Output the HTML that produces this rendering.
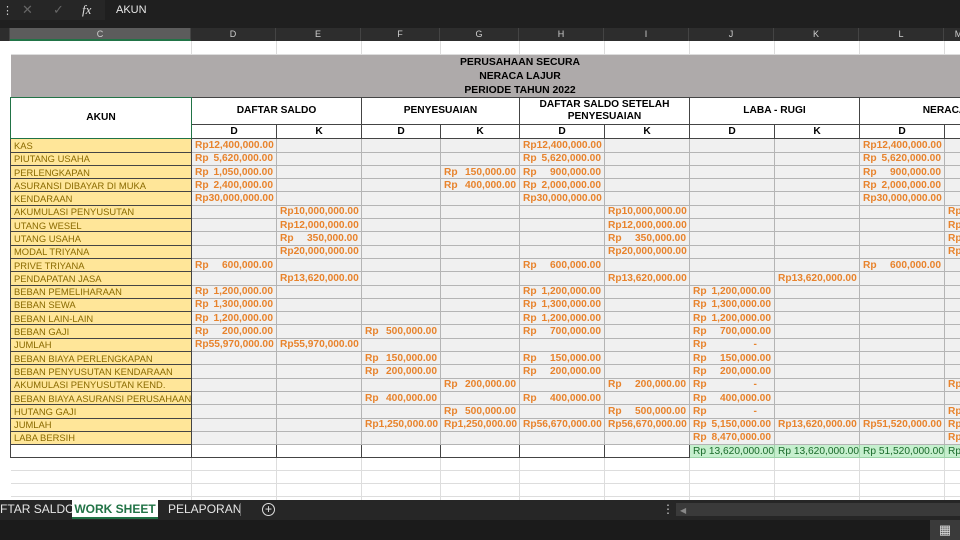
<!DOCTYPE html>
<html><head><style>
*{box-sizing:border-box;margin:0;padding:0}
body{width:960px;height:540px;overflow:hidden;position:relative;background:#fff;font-family:"Liberation Sans",sans-serif}
.top{position:absolute;left:0;top:0;width:960px;height:20px;background:#262626}
.fx{position:absolute;left:105px;top:0;right:0;height:20px;background:#1f1f1f;color:#e8e8e8;font-size:11px;line-height:20px;padding-left:11px}
.gap{position:absolute;left:0;top:20px;width:960px;height:8px;background:#1f1f1f}
.ch{position:absolute;top:28px;height:13px;background:#2d2d2d;color:#cfcfcf;font-size:9px;text-align:center;line-height:13px;border-right:1px solid #444}
table{position:absolute;left:10px;top:41px;border-collapse:collapse;table-layout:fixed;width:1019px}
td{font:bold 10.2px "Liberation Sans",sans-serif;white-space:nowrap;overflow:hidden;padding:0 3px;border:1px solid #b4b4b4;background:#f0f0f0;color:#e8832c;text-align:right;line-height:11px}
td .r{float:left}
tr.d{height:13.3px}
td.a{background:#ffe699;color:#8a6a00;font-weight:normal;text-align:left;border-color:#444;font-size:9.4px}
tr.t td{background:#aeaaaa;border:none;color:#000;text-align:center;height:14.6px;line-height:12px;vertical-align:bottom;padding:0;font-size:10.4px}
tr.h td{background:#fff;color:#000;text-align:center;border:1px solid #444;line-height:12px}
tr.g td{background:#fff;border:1px solid #444;height:13px}
tr.g td.gr{background:#c6efce;color:#1a6b2a;font-weight:normal;border-color:#9bd3a7}
.bl td{background:#fff;border:none;border-right:1px solid #ddd;border-bottom:1px solid #ddd;height:13px}
.tabs{position:absolute;left:0;top:500px;width:960px;height:20px;background:#262626;color:#e6e6e6;font-size:12px;line-height:18px}
.status{position:absolute;left:0;top:520px;width:960px;height:20px;background:#1b1b1b}
</style></head><body>
<div class="top"></div>
<div style="position:absolute;left:2px;top:4px;color:#ccc;font-size:11px">⋮</div>
<div style="position:absolute;left:22px;top:2px;color:#666;font-size:13px">✕</div>
<div style="position:absolute;left:53px;top:2px;color:#666;font-size:13px">✓</div>
<div style="position:absolute;left:82px;top:2px;color:#ddd;font:italic 13px 'Liberation Serif',serif">fx</div>
<div class="fx">AKUN</div>
<div class="gap"></div>
<div class="ch" style="left:0;width:10px;background:#2d2d2d"></div>
<div class="ch" style="left:10px;width:181px;background:#5c5c5c;border-bottom:2px solid #217346">C</div>
<div class="ch" style="left:191px;width:85px">D</div>
<div class="ch" style="left:276px;width:85px">E</div>
<div class="ch" style="left:361px;width:79px">F</div>
<div class="ch" style="left:440px;width:79px">G</div>
<div class="ch" style="left:519px;width:85px">H</div>
<div class="ch" style="left:604px;width:85px">I</div>
<div class="ch" style="left:689px;width:85px">J</div>
<div class="ch" style="left:774px;width:85px">K</div>
<div class="ch" style="left:859px;width:85px">L</div>
<div class="ch" style="left:944px;width:30px">M</div>
<table>
<colgroup><col style="width:181px"><col style="width:85px"><col style="width:85px"><col style="width:79px"><col style="width:79px"><col style="width:85px"><col style="width:85px"><col style="width:85px"><col style="width:85px"><col style="width:85px"><col style="width:85px"></colgroup>
<tr class="bl"><td></td><td></td><td></td><td></td><td></td><td></td><td></td><td></td><td></td><td></td><td></td></tr>
<tr class="t"><td colspan="11">PERUSAHAAN SECURA</td></tr>
<tr class="t"><td colspan="11">NERACA LAJUR</td></tr>
<tr class="t"><td colspan="11">PERIODE TAHUN 2022</td></tr>
<tr class="h" style="height:27px"><td rowspan="2" style="border:1.5px solid #217346">AKUN</td><td colspan="2">DAFTAR SALDO</td><td colspan="2">PENYESUAIAN</td><td colspan="2">DAFTAR SALDO SETELAH<br>PENYESUAIAN</td><td colspan="2">LABA - RUGI</td><td colspan="2">NERACA</td></tr>
<tr class="h" style="height:14px"><td>D</td><td>K</td><td>D</td><td>K</td><td>D</td><td>K</td><td>D</td><td>K</td><td>D</td><td>K</td></tr>
<tr class="d"><td class="a">KAS</td><td><span class="r">Rp</span>12,400,000.00</td><td></td><td></td><td></td><td><span class="r">Rp</span>12,400,000.00</td><td></td><td></td><td></td><td><span class="r">Rp</span>12,400,000.00</td><td></td></tr>
<tr class="d"><td class="a">PIUTANG USAHA</td><td><span class="r">Rp</span>5,620,000.00</td><td></td><td></td><td></td><td><span class="r">Rp</span>5,620,000.00</td><td></td><td></td><td></td><td><span class="r">Rp</span>5,620,000.00</td><td></td></tr>
<tr class="d"><td class="a">PERLENGKAPAN</td><td><span class="r">Rp</span>1,050,000.00</td><td></td><td></td><td><span class="r">Rp</span>150,000.00</td><td><span class="r">Rp</span>900,000.00</td><td></td><td></td><td></td><td><span class="r">Rp</span>900,000.00</td><td></td></tr>
<tr class="d"><td class="a">ASURANSI DIBAYAR DI MUKA</td><td><span class="r">Rp</span>2,400,000.00</td><td></td><td></td><td><span class="r">Rp</span>400,000.00</td><td><span class="r">Rp</span>2,000,000.00</td><td></td><td></td><td></td><td><span class="r">Rp</span>2,000,000.00</td><td></td></tr>
<tr class="d"><td class="a">KENDARAAN</td><td><span class="r">Rp</span>30,000,000.00</td><td></td><td></td><td></td><td><span class="r">Rp</span>30,000,000.00</td><td></td><td></td><td></td><td><span class="r">Rp</span>30,000,000.00</td><td></td></tr>
<tr class="d"><td class="a">AKUMULASI PENYUSUTAN</td><td></td><td><span class="r">Rp</span>10,000,000.00</td><td></td><td></td><td></td><td><span class="r">Rp</span>10,000,000.00</td><td></td><td></td><td></td><td style="text-align:left">Rp</td></tr>
<tr class="d"><td class="a">UTANG WESEL</td><td></td><td><span class="r">Rp</span>12,000,000.00</td><td></td><td></td><td></td><td><span class="r">Rp</span>12,000,000.00</td><td></td><td></td><td></td><td style="text-align:left">Rp</td></tr>
<tr class="d"><td class="a">UTANG USAHA</td><td></td><td><span class="r">Rp</span>350,000.00</td><td></td><td></td><td></td><td><span class="r">Rp</span>350,000.00</td><td></td><td></td><td></td><td style="text-align:left">Rp</td></tr>
<tr class="d"><td class="a">MODAL TRIYANA</td><td></td><td><span class="r">Rp</span>20,000,000.00</td><td></td><td></td><td></td><td><span class="r">Rp</span>20,000,000.00</td><td></td><td></td><td></td><td style="text-align:left">Rp</td></tr>
<tr class="d"><td class="a">PRIVE TRIYANA</td><td><span class="r">Rp</span>600,000.00</td><td></td><td></td><td></td><td><span class="r">Rp</span>600,000.00</td><td></td><td></td><td></td><td><span class="r">Rp</span>600,000.00</td><td></td></tr>
<tr class="d"><td class="a">PENDAPATAN JASA</td><td></td><td><span class="r">Rp</span>13,620,000.00</td><td></td><td></td><td></td><td><span class="r">Rp</span>13,620,000.00</td><td></td><td><span class="r">Rp</span>13,620,000.00</td><td></td><td></td></tr>
<tr class="d"><td class="a">BEBAN PEMELIHARAAN</td><td><span class="r">Rp</span>1,200,000.00</td><td></td><td></td><td></td><td><span class="r">Rp</span>1,200,000.00</td><td></td><td><span class="r">Rp</span>1,200,000.00</td><td></td><td></td><td></td></tr>
<tr class="d"><td class="a">BEBAN SEWA</td><td><span class="r">Rp</span>1,300,000.00</td><td></td><td></td><td></td><td><span class="r">Rp</span>1,300,000.00</td><td></td><td><span class="r">Rp</span>1,300,000.00</td><td></td><td></td><td></td></tr>
<tr class="d"><td class="a">BEBAN LAIN-LAIN</td><td><span class="r">Rp</span>1,200,000.00</td><td></td><td></td><td></td><td><span class="r">Rp</span>1,200,000.00</td><td></td><td><span class="r">Rp</span>1,200,000.00</td><td></td><td></td><td></td></tr>
<tr class="d"><td class="a">BEBAN GAJI</td><td><span class="r">Rp</span>200,000.00</td><td></td><td><span class="r">Rp</span>500,000.00</td><td></td><td><span class="r">Rp</span>700,000.00</td><td></td><td><span class="r">Rp</span>700,000.00</td><td></td><td></td><td></td></tr>
<tr class="d"><td class="a">JUMLAH</td><td><span class="r">Rp</span>55,970,000.00</td><td><span class="r">Rp</span>55,970,000.00</td><td></td><td></td><td></td><td></td><td><span class="r">Rp</span>-&nbsp;&nbsp;&nbsp;&nbsp;&nbsp;</td><td></td><td></td><td></td></tr>
<tr class="d"><td class="a">BEBAN BIAYA PERLENGKAPAN</td><td></td><td></td><td><span class="r">Rp</span>150,000.00</td><td></td><td><span class="r">Rp</span>150,000.00</td><td></td><td><span class="r">Rp</span>150,000.00</td><td></td><td></td><td></td></tr>
<tr class="d"><td class="a">BEBAN PENYUSUTAN KENDARAAN</td><td></td><td></td><td><span class="r">Rp</span>200,000.00</td><td></td><td><span class="r">Rp</span>200,000.00</td><td></td><td><span class="r">Rp</span>200,000.00</td><td></td><td></td><td></td></tr>
<tr class="d"><td class="a">AKUMULASI PENYUSUTAN KEND.</td><td></td><td></td><td></td><td><span class="r">Rp</span>200,000.00</td><td></td><td><span class="r">Rp</span>200,000.00</td><td><span class="r">Rp</span>-&nbsp;&nbsp;&nbsp;&nbsp;&nbsp;</td><td></td><td></td><td style="text-align:left">Rp</td></tr>
<tr class="d"><td class="a">BEBAN BIAYA ASURANSI PERUSAHAAN</td><td></td><td></td><td><span class="r">Rp</span>400,000.00</td><td></td><td><span class="r">Rp</span>400,000.00</td><td></td><td><span class="r">Rp</span>400,000.00</td><td></td><td></td><td></td></tr>
<tr class="d"><td class="a">HUTANG GAJI</td><td></td><td></td><td></td><td><span class="r">Rp</span>500,000.00</td><td></td><td><span class="r">Rp</span>500,000.00</td><td><span class="r">Rp</span>-&nbsp;&nbsp;&nbsp;&nbsp;&nbsp;</td><td></td><td></td><td style="text-align:left">Rp</td></tr>
<tr class="d"><td class="a">JUMLAH</td><td></td><td></td><td><span class="r">Rp</span>1,250,000.00</td><td><span class="r">Rp</span>1,250,000.00</td><td><span class="r">Rp</span>56,670,000.00</td><td><span class="r">Rp</span>56,670,000.00</td><td><span class="r">Rp</span>5,150,000.00</td><td><span class="r">Rp</span>13,620,000.00</td><td><span class="r">Rp</span>51,520,000.00</td><td style="text-align:left">Rp</td></tr>
<tr class="d"><td class="a">LABA BERSIH</td><td></td><td></td><td></td><td></td><td></td><td></td><td><span class="r">Rp</span>8,470,000.00</td><td></td><td></td><td style="text-align:left">Rp</td></tr>
<tr class="g"><td></td><td></td><td></td><td></td><td></td><td></td><td></td><td class="gr">Rp 13,620,000.00</td><td class="gr">Rp 13,620,000.00</td><td class="gr">Rp 51,520,000.00</td><td class="gr" style="text-align:left">Rp</td></tr>
<tr class="bl"><td></td><td></td><td></td><td></td><td></td><td></td><td></td><td></td><td></td><td></td><td></td></tr>
<tr class="bl"><td></td><td></td><td></td><td></td><td></td><td></td><td></td><td></td><td></td><td></td><td></td></tr>
<tr class="bl"><td></td><td></td><td></td><td></td><td></td><td></td><td></td><td></td><td></td><td></td><td></td></tr>
<tr class="bl"><td></td><td></td><td></td><td></td><td></td><td></td><td></td><td></td><td></td><td></td><td></td></tr>
</table>
<div class="tabs">
<span style="position:absolute;left:0;top:0">FTAR SALDO</span>
<span style="position:absolute;left:72px;top:0;width:86px;height:19px;background:#fff;color:#217346;font-weight:bold;text-align:center;border-bottom:2px solid #217346">WORK SHEET</span>
<span style="position:absolute;left:168px;top:0">PELAPORAN</span>
<span style="position:absolute;left:240px;top:3px;width:1px;height:13px;background:#666"></span>
<span style="position:absolute;left:262px;top:3px;width:13px;height:13px;border:1px solid #ddd;border-radius:50%;text-align:center;line-height:10px;font-size:12px">+</span>
<span style="position:absolute;left:662px;top:0;color:#ccc">⋮</span>
<span style="position:absolute;left:676px;top:3px;width:284px;height:13px;background:#3a3a3a"></span>
<span style="position:absolute;left:680px;top:2px;font-size:8px;color:#888">◀</span>
</div>
<div class="status">
<span style="position:absolute;left:930px;top:0;width:30px;height:20px;background:#3a3a3a;color:#ddd;text-align:center;font-size:13px;line-height:20px">▦</span>
</div>
</body></html>
